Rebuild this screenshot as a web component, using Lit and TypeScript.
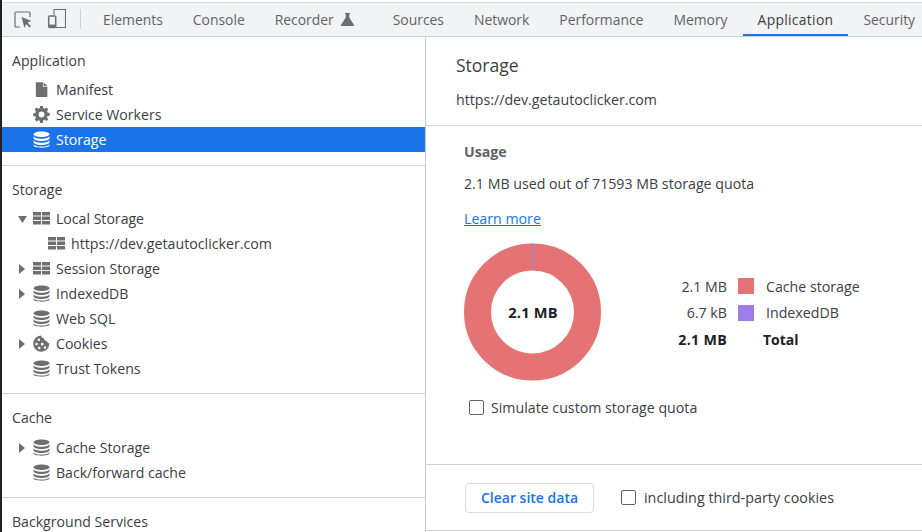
import { LitElement, html, css, svg } from 'lit';
import { customElement } from 'lit/decorators.js';

const dbIcon = svg`<path d="M8.500.5C4.100.5.500 1.700.500 3.200s3.600 2.700 8 2.700 8-1.200 8-2.700S12.900.5 8.500.5z"/><path d="M.500 5v2.300c0 1.500 3.600 2.700 8 2.700s8-1.200 8-2.700V5c0 1.500-3.600 2.700-8 2.700S.500 6.500.500 5z"/><path d="M.500 9v2.300c0 1.500 3.600 2.700 8 2.700s8-1.200 8-2.700V9c0 1.500-3.600 2.700-8 2.700S.500 10.500.500 9z"/><path d="M.500 13v1.300c0 1.400 3.600 2.400 8 2.400s8-1 8-2.400V13c0 1.500-3.600 2.600-8 2.600S.500 14.500.500 13z"/>`;
const gridIcon = svg`<path d="M0 2h8v3.500H0zM9 2h8v3.500H9zM0 6.500h8v3.500H0zM9 6.500h8v3.500H9zM0 11h8v3.500H0zM9 11h8v3.500H9z"/>`;
const fileIcon = svg`<path d="M2.500 1.200h7.500v4.800h4.700v10.100c0 .5-.4.900-.9.900H3.400c-.5 0-.9-.4-.9-.9V1.200z"/><path d="M10.800 1.200l3.900 4h-3.900z"/>`;
const gearIcon = svg`<path fill-rule="evenodd" d="M7 0h3l.4 2.300 1.500.6L13.800 1.600 15.900 3.700 14.500 5.600l.6 1.500 2.400.4v3l-2.400.4-.6 1.500 1.400 1.900-2.100 2.100-1.900-1.400-1.500.6L10 18.500H7l-.4-2.400-1.500-.6-1.900 1.400L1.100 14.800 2.500 12.900l-.6-1.500-2.400-.4v-3l2.400-.4.6-1.500L1.100 3.700 3.200 1.600l1.900 1.300 1.500-.6L7 0zM8.500 6a3.200 3.200 0 1 0 0 6.400 3.200 3.200 0 0 0 0-6.400z"/>`;
const cookieIcon = svg`<path fill-rule="evenodd" d="M8.200.6c.3 1.600 1.500 2.600 3 2.700.2 1.700 1.500 3 3.200 3.100.4 1.400 1.400 2.100 2.400 2.400A8.300 8.300 0 1 1 8.200.6zM6 3.600a1.300 1.300 0 1 0 0 2.600 1.300 1.300 0 0 0 0-2.600zM3.700 8a1.300 1.300 0 1 0 0 2.600 1.300 1.300 0 0 0 0-2.600zM9.500 8a1.400 1.400 0 1 0 0 2.800 1.400 1.400 0 0 0 0-2.800zM6.500 12a1.300 1.300 0 1 0 0 2.600 1.300 1.300 0 0 0 0-2.600zM12.300 11.500a1.300 1.300 0 1 0 0 2.600 1.300 1.300 0 0 0 0-2.600z"/>`;

interface TreeRow {
  label: string;
  icon: 'db' | 'grid' | 'file' | 'gear' | 'cookie';
  arrow?: 'open' | 'closed';
  depth?: number;
  selected?: boolean;
}

const application: TreeRow[] = [
  { label: 'Manifest', icon: 'file' },
  { label: 'Service Workers', icon: 'gear' },
  { label: 'Storage', icon: 'db', selected: true },
];
const storage: TreeRow[] = [
  { label: 'Local Storage', icon: 'grid', arrow: 'open' },
  { label: 'https://dev.getautoclicker.com', icon: 'grid', depth: 1 },
  { label: 'Session Storage', icon: 'grid', arrow: 'closed' },
  { label: 'IndexedDB', icon: 'db', arrow: 'closed' },
  { label: 'Web SQL', icon: 'db' },
  { label: 'Cookies', icon: 'cookie', arrow: 'closed' },
  { label: 'Trust Tokens', icon: 'db' },
];
const cache: TreeRow[] = [
  { label: 'Cache Storage', icon: 'db', arrow: 'closed' },
  { label: 'Back/forward cache', icon: 'db' },
];

const tabs = ['Elements', 'Console', 'Recorder', 'Sources', 'Network', 'Performance', 'Memory', 'Application', 'Security'];

@customElement('app-root')
export class AppRoot extends LitElement {
  static styles = css`
    :host {
      display: block;
      width: 922px;
      height: 532px;
      overflow: hidden;
      box-sizing: border-box;
      border-left: 2px solid #202124;
      background: #fff;
      color: #3c4043;
      font-family: 'Open Sans', 'Noto Sans', sans-serif;
      font-size: 14.2px;
    }

    .toolbar {
      display: flex;
      align-items: stretch;
      box-sizing: border-box;
      height: 37px;
      border-top: 2px solid #fff;
      border-bottom: 1px solid #cbcdd1;
      background: #f1f3f4;
      box-shadow: inset 0 1px 0 #dadce0;
      white-space: nowrap;
      overflow: hidden;
    }

    .tool {
      flex: none;
      display: flex;
      align-items: center;
      justify-content: center;
      width: 32px;
      fill: none;
      stroke: #6e6e6e;
    }

    .tool:first-child {
      margin-left: 6px;
    }

    .sep {
      flex: none;
      width: 1px;
      height: 20px;
      margin: 7px 7px 0 8px;
      background: #d0d2d5;
    }

    .tab {
      flex: none;
      display: flex;
      align-items: center;
      gap: 7px;
      box-sizing: border-box;
      height: 34px;
      padding: 0 15px;
      font-size: 13.9px;
      color: #5f6368;
    }

    .tab.active {
      border-bottom: 2px solid #1a73e8;
      padding-top: 2px;
      letter-spacing: 0.3px;
      color: #3c4043;
    }

    .tab svg {
      margin-right: 9px;
      fill: #6e6e6e;
    }

    .body {
      display: flex;
      height: 495px;
    }

    .sidebar {
      flex: none;
      box-sizing: border-box;
      width: 424px;
      border-right: 1px solid #cbcdd1;
      overflow: hidden;
      font-size: 14.1px;
    }

    .section {
      padding: 11px 0 12px;
      border-bottom: 1px solid #d0d0d0;
    }

    .section:first-child {
      padding-bottom: 13px;
    }

    .section:last-child {
      border-bottom: none;
    }

    .heading {
      height: 25px;
      margin-bottom: 4px;
      padding-left: 10px;
      line-height: 25px;
    }

    .section.cache .heading {
      margin-bottom: 5px;
    }

    .row {
      display: flex;
      align-items: center;
      height: 25px;
      padding-left: 15px;
      white-space: nowrap;
    }

    .row.depth1 {
      padding-left: 46px;
      font-size: 14.2px;
    }

    .row.selected {
      background: #1a73e8;
      color: #fff;
    }

    .row.selected .icon {
      fill: #fff;
    }

    .arrow {
      flex: none;
      width: 16px;
      fill: #6e6e6e;
    }

    .icon {
      flex: none;
      width: 17px;
      height: 17px;
      margin-right: 6px;
      fill: #6e6e6e;
    }

    .main {
      flex: 1;
      min-width: 0;
    }

    .header {
      box-sizing: border-box;
      height: 89px;
      padding: 16px 0 0 30px;
      border-bottom: 1px solid #d0d0d0;
    }

    .title {
      height: 24px;
      line-height: 24px;
      font-size: 17.5px;
    }

    .origin {
      margin-top: 11px;
      line-height: 24px;
    }

    .usage {
      box-sizing: border-box;
      height: 339px;
      padding: 14px 0 0 38px;
      border-bottom: 1px solid #d0d0d0;
    }

    .usage-title {
      line-height: 24px;
      font-weight: 700;
      color: #5f6368;
    }

    .usage-text {
      margin-top: 8px;
      line-height: 24px;
    }

    .learn {
      display: block;
      margin-top: 11px;
      line-height: 24px;
      color: #1a73e8;
    }

    .chart {
      display: flex;
      align-items: center;
      margin-top: 12px;
    }

    .donut {
      position: relative;
      flex: none;
      width: 138px;
      height: 138px;
    }

    .donut-label {
      position: absolute;
      inset: 0;
      display: flex;
      align-items: center;
      justify-content: center;
      font-size: 14.6px;
      font-weight: 700;
      letter-spacing: 0.2px;
      color: #202124;
    }

    .legend {
      display: grid;
      grid-template-columns: 84px 16px auto;
      column-gap: 11px;
      align-items: center;
      grid-auto-rows: 26.5px;
      margin: 1px 0 0 41px;
    }

    .size {
      text-align: right;
    }

    .swatch {
      width: 16px;
      height: 16px;
    }

    .name {
      margin-left: 1px;
    }

    .bold {
      font-weight: 700;
      color: #202124;
    }

    .size.bold {
      letter-spacing: 0.3px;
    }

    .total {
      margin-left: -2px;
      font-size: 14px;
    }

    .check {
      display: flex;
      align-items: center;
      gap: 7px;
      white-space: nowrap;
    }

    .box {
      flex: none;
      box-sizing: border-box;
      width: 15px;
      height: 15px;
      border: 1px solid #5f6368;
      border-radius: 2px;
      background: #fff;
    }

    .quota {
      margin: 17px 0 0 5px;
    }

    .actions {
      display: flex;
      align-items: center;
      box-sizing: border-box;
      height: 66px;
      padding: 0 0 0 39px;
      border-bottom: 1px solid #d0d0d0;
    }

    .actions .check {
      gap: 8px;
      font-size: 14.35px;
    }

    .clear {
      box-sizing: border-box;
      width: 129px;
      height: 30px;
      margin-right: 27px;
      border: 1px solid #dadce0;
      border-radius: 4px;
      background: #fff;
      color: #1a73e8;
      font: inherit;
      font-size: 14px;
      font-weight: 600;
    }
  `;

  private renderIcon(kind: TreeRow['icon']) {
    if (kind === 'db') return svg`<svg class="icon" viewBox="0 0 17 17">${dbIcon}</svg>`;
    if (kind === 'grid') return svg`<svg class="icon" viewBox="0 0 17 17">${gridIcon}</svg>`;
    if (kind === 'file') return svg`<svg class="icon" viewBox="0 0 17 18">${fileIcon}</svg>`;
    if (kind === 'gear') return svg`<svg class="icon" viewBox="-0.5 0 18 18.5">${gearIcon}</svg>`;
    return svg`<svg class="icon" viewBox="0 0 17.5 17.5">${cookieIcon}</svg>`;
  }

  private renderArrow(row: TreeRow) {
    if (row.depth) return '';
    if (!row.arrow) return html`<span class="arrow"></span>`;
    const d = row.arrow === 'open' ? 'M1 3h9L5.500 10z' : 'M2 1l6 5-6 5z';
    return html`<svg class="arrow" height="12" viewBox="0 0 16 12"><path d=${d}></path></svg>`;
  }

  private renderRows(rows: TreeRow[]) {
    return rows.map(row => html`
      <div class="row ${row.selected ? 'selected' : ''} ${row.depth ? 'depth1' : ''}">
        ${this.renderArrow(row)}${this.renderIcon(row.icon)}<span>${row.label}</span>
      </div>
    `);
  }

  render() {
    return html`
      <div class="toolbar">
        <div class="tool">
          <svg width="20" height="20" viewBox="0 0 20 20">
            <path d="M6 18H2a1 1 0 0 1-1-1V4a1 1 0 0 1 1-1h13a1 1 0 0 1 1 1v4" stroke-width="1.200"></path>
            <path d="M7.500 8l10 4-4 1.600 3.600 3.600-1.400 1.400-3.600-3.600-1.600 4z" fill="#6e6e6e" stroke="none"></path>
          </svg>
        </div>
        <div class="tool">
          <svg width="20" height="22" viewBox="0 0 20 22">
            <path d="M8 7V1.500h11.500v18H10" stroke-width="1.100"></path>
            <rect x="2.700" y="8" width="7" height="11.500" rx="1" stroke-width="1.500"></rect>
            <path d="M2.700 17.800h7" stroke-width="2.400"></path>
          </svg>
        </div>
        <div class="sep"></div>
        ${tabs.map(tab => html`
          <div class="tab ${tab === 'Application' ? 'active' : ''}">
            ${tab}
            ${tab === 'Recorder'
              ? html`<svg width="13" height="14" viewBox="0 0 13 14"><path d="M4 1h5v1H8.300v3.500L13 13v1H0v-1l4.700-7.500V2H4z"></path></svg>`
              : ''}
          </div>
        `)}
      </div>
      <div class="body">
        <div class="sidebar">
          <div class="section">
            <div class="heading">Application</div>
            ${this.renderRows(application)}
          </div>
          <div class="section">
            <div class="heading">Storage</div>
            ${this.renderRows(storage)}
          </div>
          <div class="section cache">
            <div class="heading">Cache</div>
            ${this.renderRows(cache)}
          </div>
          <div class="section">
            <div class="heading">Background Services</div>
          </div>
        </div>
        <div class="main">
          <div class="header">
            <div class="title">Storage</div>
            <div class="origin">https://dev.getautoclicker.com</div>
          </div>
          <div class="usage">
            <div class="usage-title">Usage</div>
            <div class="usage-text">2.1 MB used out of 71593 MB storage quota</div>
            <a class="learn" href="#" @click=${(e: Event) => e.preventDefault()}>Learn more</a>
            <div class="chart">
              <div class="donut">
                <svg width="138" height="138" viewBox="0 0 138 138">
                  <circle cx="68.500" cy="69" r="55" fill="none" stroke="#e57373" stroke-width="27"></circle>
                  <path d="M68.500 0.500V27" stroke="#9b7fe6" stroke-width="1.200"></path>
                </svg>
                <div class="donut-label">2.1 MB</div>
              </div>
              <div class="legend">
                <span class="size">2.1 MB</span>
                <span class="swatch" style="background:#e57373"></span>
                <span class="name">Cache storage</span>
                <span class="size">6.7 kB</span>
                <span class="swatch" style="background:#9b7fe6"></span>
                <span class="name">IndexedDB</span>
                <span class="size bold">2.1 MB</span>
                <span></span>
                <span class="bold total">Total</span>
              </div>
            </div>
            <label class="check quota"><span class="box"></span>Simulate custom storage quota</label>
          </div>
          <div class="actions">
            <button class="clear">Clear site data</button>
            <label class="check"><span class="box"></span>including third-party cookies</label>
          </div>
        </div>
      </div>
    `;
  }
}
